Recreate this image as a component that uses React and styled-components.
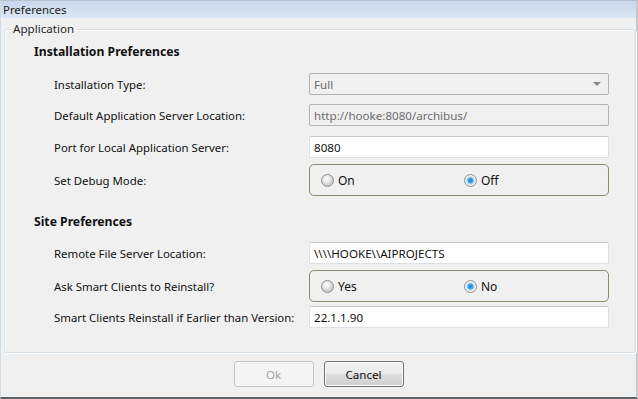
import React from 'react';
import styled, { createGlobalStyle } from 'styled-components';

const GlobalStyle = createGlobalStyle`
  body {
    margin: 0;
    background: #f0f0f0;
    font-family: 'Noto Sans', 'Open Sans', sans-serif;
  }
`;

const Window = styled.div`
  width: 638px;
  height: 399px;
  box-sizing: border-box;
  display: flex;
  flex-direction: column;
  background: #f0f0f0;
  border-left: 1px solid #cfdbe8;
  border-right: 2px solid #c6c9cc;
  border-bottom: 2px solid #5f6264;
  border-top: 1px solid #b9c2cc;
`;

const TitleBar = styled.div`
  height: 17px;
  flex: none;
  display: flex;
  align-items: center;
  padding-left: 2px;
  font-size: 11.4px;
  color: #222;
  background: linear-gradient(#c8d8ec, #dae6f3);
`;

const GroupBox = styled.fieldset`
  margin: 4px 0 0 3px;
  padding: 0;
  height: 331px;
  box-sizing: border-box;
  border: 1px solid #d5dfe5;
  border-radius: 3px;
  box-shadow: inset 1px 1px 0 #fff, 1px 1px 0 #fff;
`;

const Legend = styled.legend`
  margin-left: 6px;
  padding: 0 2px;
  font-size: 11.6px;
  line-height: 14px;
  color: #1e1e1e;
`;

const Content = styled.div`
  padding: 8px 0 0 29px;
  display: flex;
  flex-direction: column;
`;

const Heading = styled.div`
  font-size: 12.2px;
  font-weight: bold;
  line-height: 16px;
  color: #111;
  margin-top: ${p => p.$top}px;
  margin-bottom: ${p => p.$bottom}px;
`;

const Row = styled.div`
  display: grid;
  grid-template-columns: 255px 300px;
  align-items: center;
  padding-left: 20px;
  margin-top: ${p => p.$top || 0}px;
`;

const Label = styled.span`
  font-size: 11.4px;
  color: #111;
`;

const Field = styled.div`
  height: 22px;
  box-sizing: border-box;
  display: flex;
  align-items: center;
  justify-content: space-between;
  padding: 0 7px 0 4px;
  font-size: 11.6px;
  border-radius: 2px;
  color: ${p => (p.$disabled ? '#6d6d6d' : '#111')};
  background: ${p => (p.$disabled ? '#f0f0f0' : '#fff')};
  border: 1px solid ${p => (p.$disabled ? '#b3b3b3' : '#dcdfe3')};
  border-top-color: ${p => (p.$disabled ? '#b3b3b3' : '#c4c7cc')};
`;

const Arrow = styled.span`
  width: 0;
  height: 0;
  border-left: 4px solid transparent;
  border-right: 4px solid transparent;
  border-top: 4px solid #8a8a8a;
`;

const RadioGroup = styled.div`
  height: 32px;
  box-sizing: border-box;
  display: grid;
  grid-template-columns: 143px 143px;
  align-items: center;
  padding-left: 11px;
  border: 1px solid #868c6c;
  border-radius: 5px;
`;

const Option = styled.label`
  display: flex;
  align-items: center;
  gap: 4px;
  font-size: 12px;
  color: #111;
`;

const Dot = styled.span`
  width: 13px;
  height: 13px;
  box-sizing: border-box;
  border-radius: 50%;
  border: 1px solid #8d8f92;
  background: ${p =>
    p.$checked
      ? 'radial-gradient(circle, #1b86d6 0, #3fa6e8 2.5px, #bcdff3 3.5px, #f3f3f3 5px)'
      : 'radial-gradient(circle at 40% 35%, #ffffff 0, #e4e4e4 4px, #cdcdcd 6px)'};
`;

const Footer = styled.div`
  flex: 1;
  display: flex;
  justify-content: center;
  align-items: center;
  gap: 10px;
  padding-bottom: 2px;
`;

const Button = styled.button`
  width: 80px;
  height: 26px;
  font-family: inherit;
  font-size: 11.6px;
  border-radius: 3px;
  color: ${p => (p.disabled ? '#a3a3a3' : '#111')};
  border: 1px solid ${p => (p.disabled ? '#c3c7ca' : '#707070')};
  background: ${p =>
    p.disabled
      ? '#f4f4f4'
      : 'linear-gradient(#f2f2f2 0, #ebebeb 50%, #dddddd 51%, #cfcfcf 100%)'};
  box-shadow: inset 0 0 0 1px ${p => (p.disabled ? '#f4f4f4' : '#fcfcfc')};
`;

function Radio({ label, checked }) {
  return (
    <Option>
      <Dot $checked={checked} />
      {label}
    </Option>
  );
}

export default function App() {
  return (
    <>
      <GlobalStyle />
      <Window>
        <TitleBar>Preferences</TitleBar>
        <GroupBox>
          <Legend>Application</Legend>
          <Content>
            <Heading $top={0} $bottom={13}>Installation Preferences</Heading>
            <Row>
              <Label>Installation Type:</Label>
              <Field $disabled>
                Full
                <Arrow />
              </Field>
            </Row>
            <Row $top={9}>
              <Label>Default Application Server Location:</Label>
              <Field $disabled>http://hooke:8080/archibus/</Field>
            </Row>
            <Row $top={10}>
              <Label>Port for Local Application Server:</Label>
              <Field>8080</Field>
            </Row>
            <Row $top={6}>
              <Label>Set Debug Mode:</Label>
              <RadioGroup>
                <Radio label="On" />
                <Radio label="Off" checked />
              </RadioGroup>
            </Row>
            <Heading $top={18} $bottom={12}>Site Preferences</Heading>
            <Row>
              <Label>Remote File Server Location:</Label>
              <Field>{'\\\\\\\\HOOKE\\\\AIPROJECTS'}</Field>
            </Row>
            <Row $top={6}>
              <Label>Ask Smart Clients to Reinstall?</Label>
              <RadioGroup>
                <Radio label="Yes" />
                <Radio label="No" checked />
              </RadioGroup>
            </Row>
            <Row $top={4}>
              <Label>Smart Clients Reinstall if Earlier than Version:</Label>
              <Field>22.1.1.90</Field>
            </Row>
          </Content>
        </GroupBox>
        <Footer>
          <Button disabled>Ok</Button>
          <Button>Cancel</Button>
        </Footer>
      </Window>
    </>
  );
}
